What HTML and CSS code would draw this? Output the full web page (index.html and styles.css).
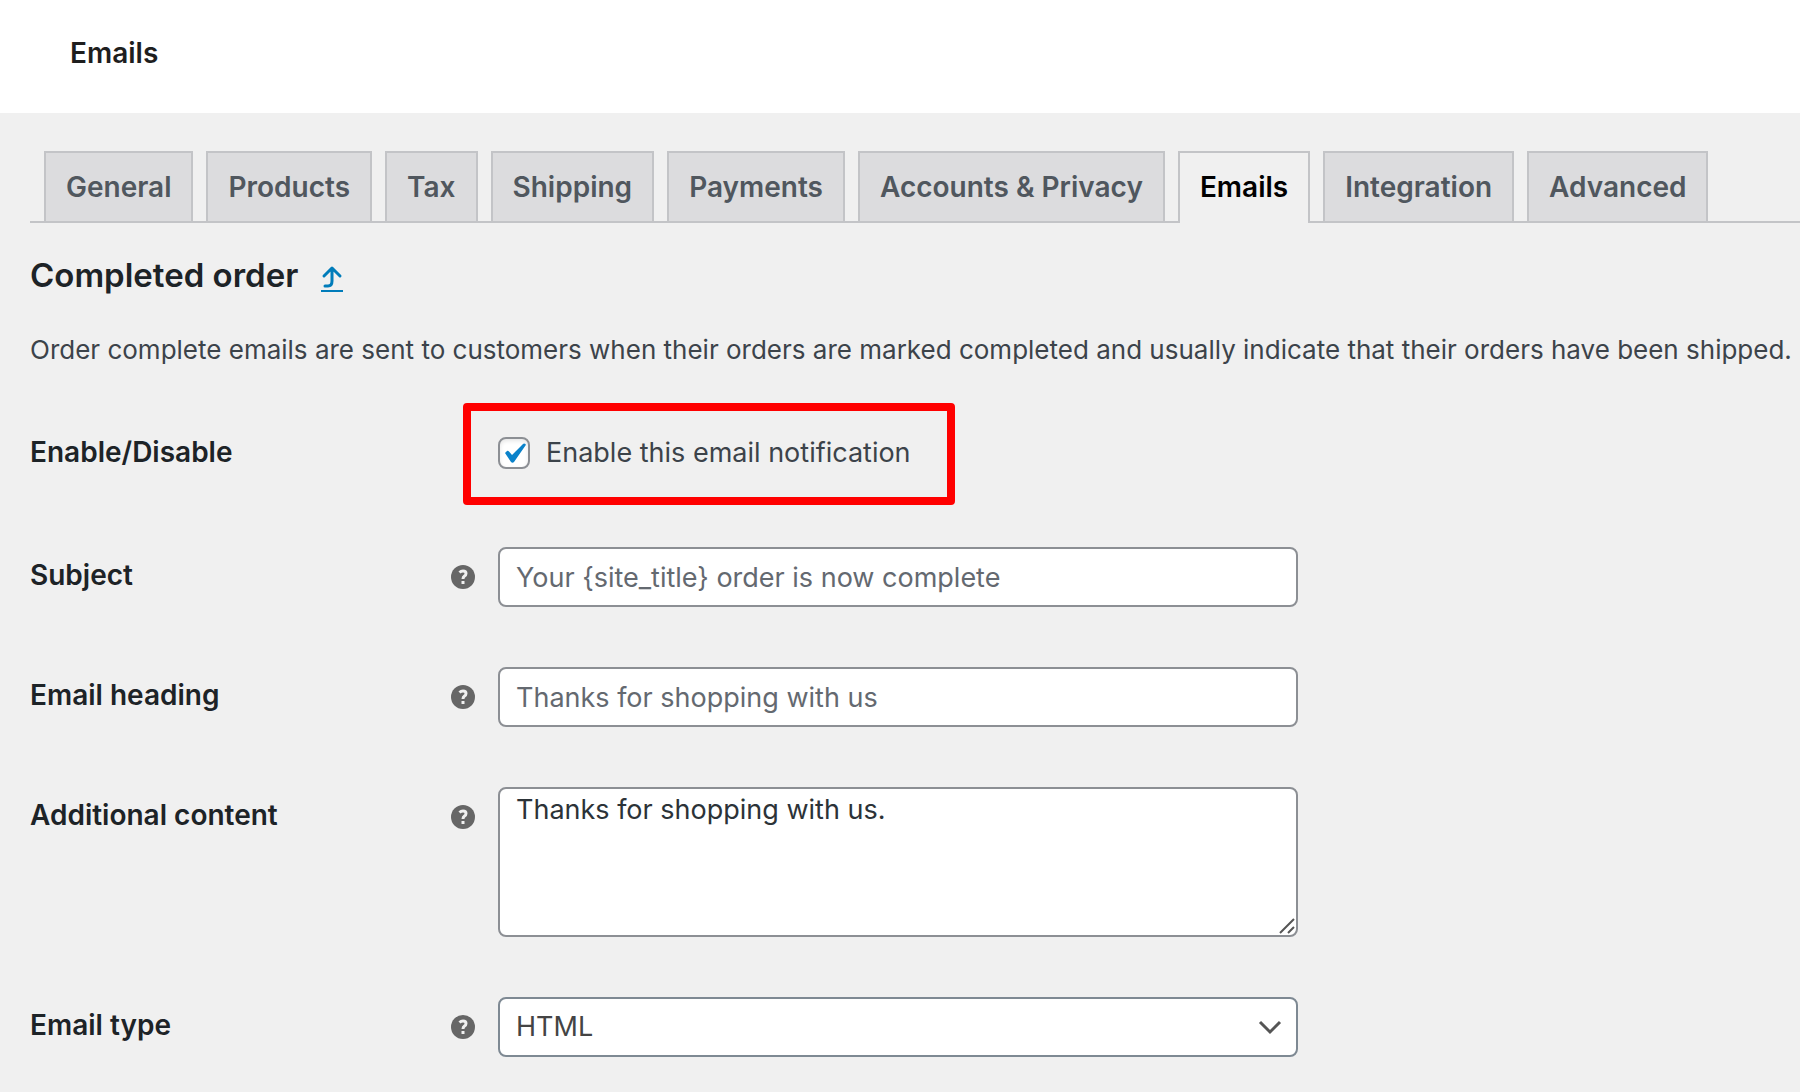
FILE: index.html
```html
<!DOCTYPE html>
<html lang="en">

<head>
	<meta charset="UTF-8">
	<title>Emails - Completed order</title>
	<meta name="viewport" content="width=device-width">
	<link rel="stylesheet" href="styles.css">
</head>

<body>
	<header class="topbar">
		<h1>Emails</h1>
	</header>
	<nav class="tabs">
		<a href="#" class="tab">General</a>
		<a href="#" class="tab">Products</a>
		<a href="#" class="tab">Tax</a>
		<a href="#" class="tab">Shipping</a>
		<a href="#" class="tab">Payments</a>
		<a href="#" class="tab">Accounts &amp; Privacy</a>
		<a href="#" class="tab active">Emails</a>
		<a href="#" class="tab">Integration</a>
		<a href="#" class="tab">Advanced</a>
	</nav>
	<main>
		<div class="title">
			<h2>Completed order</h2>
			<a href="#" class="back" aria-label="Return to emails">
				<svg width="24" height="28" viewBox="0 0 24 28" fill="none" stroke="currentColor">
					<path d="M4 12l8-8 8 8M12 5v12q0 5-4 5H5" stroke-width="3" stroke-linecap="round" stroke-linejoin="round" />
					<path d="M1 27h22" stroke-width="2" />
				</svg>
			</a>
		</div>
		<p class="description">Order complete emails are sent to customers when their orders are marked completed and usually indicate that their orders have been shipped.</p>

		<form action="#" method="post" class="settings">
			<div class="row">
				<span class="name">Enable/Disable</span>
				<label class="check" for="enabled">
					<span class="box">
						<input type="checkbox" id="enabled" checked>
						<svg class="tick" width="32" height="32" viewBox="0 0 32 32">
							<path d="M7 16l2-2q1-.5 2 .5l3 3.500L25 7q1-1 2.500 0 .5.500 0 1.500L16 25q-1.500 1.500-3 0z" fill="currentColor" />
						</svg>
					</span>
					Enable this email notification
				</label>
			</div>
			<div class="row">
				<label class="name" for="subject">Subject</label>
				<svg class="help" width="24" height="24" viewBox="0 0 24 24">
					<circle cx="12" cy="12" r="12" />
					<path d="M8.500 7.500q1.500-1.500 3.500-1.500 3 0 3 2.500 0 1.500-1.500 2.500t-1.500 3" />
					<path d="M12 16v3" />
				</svg>
				<input type="text" class="field" id="subject" placeholder="Your {site_title} order is now complete">
			</div>
			<div class="row">
				<label class="name" for="heading">Email heading</label>
				<svg class="help" width="24" height="24" viewBox="0 0 24 24">
					<circle cx="12" cy="12" r="12" />
					<path d="M8.500 7.500q1.500-1.500 3.500-1.500 3 0 3 2.500 0 1.500-1.500 2.500t-1.500 3" />
					<path d="M12 16v3" />
				</svg>
				<input type="text" class="field" id="heading" placeholder="Thanks for shopping with us">
			</div>
			<div class="row">
				<label class="name" for="content">Additional content</label>
				<svg class="help" width="24" height="24" viewBox="0 0 24 24">
					<circle cx="12" cy="12" r="12" />
					<path d="M8.500 7.500q1.500-1.500 3.500-1.500 3 0 3 2.500 0 1.500-1.500 2.500t-1.500 3" />
					<path d="M12 16v3" />
				</svg>
				<div class="control">
					<textarea class="field" id="content">Thanks for shopping with us.</textarea>
					<svg class="grip" width="16" height="16" viewBox="0 0 16 16">
						<path d="M1 15L15 1M9 15l6-6" />
					</svg>
				</div>
			</div>
			<div class="row">
				<label class="name" for="type">Email type</label>
				<svg class="help" width="24" height="24" viewBox="0 0 24 24">
					<circle cx="12" cy="12" r="12" />
					<path d="M8.500 7.500q1.500-1.500 3.500-1.500 3 0 3 2.500 0 1.500-1.500 2.500t-1.500 3" />
					<path d="M12 16v3" />
				</svg>
				<div class="control">
					<select class="field" id="type">
						<option>HTML</option>
						<option>Plain text</option>
						<option>Multipart</option>
					</select>
					<svg class="chevron" width="24" height="16" viewBox="0 0 24 16">
						<path d="M2 3l10 10L22 3" />
					</svg>
				</div>
			</div>
		</form>
	</main>
</body>

</html>
```
FILE: styles.css
```css
* {
	box-sizing: border-box;
}

body {
	margin: 0;
	background: #f0f0f0;
	color: #3c434a;
	font-family: Inter, "Liberation Sans", sans-serif;
	font-size: 27px;
}

h1,
h2,
p {
	margin: 0;
}

.topbar {
	padding: 34px 70px 41px;
	background: #fff;
}

.topbar h1 {
	color: #1e1e1e;
	font-size: 28px;
	font-weight: 600;
	line-height: 38px;
}

.tabs {
	display: flex;
	gap: 13px;
	margin: 38px 0 0 30px;
	padding-left: 14px;
	border-bottom: 2px solid #c3c4c7;
}

.tab {
	padding: 10px 20px;
	border: 2px solid #c3c4c7;
	border-bottom: 0;
	background: #dcdcde;
	color: #50575e;
	font-size: 28px;
	font-weight: 600;
	line-height: 48px;
	text-decoration: none;
	white-space: nowrap;
}

.tab.active {
	margin-bottom: -2px;
	background: #f0f0f0;
	color: #000;
}

main {
	padding: 30px 0 30px 30px;
}

.title {
	display: flex;
	align-items: center;
	gap: 22px;
}

.title h2 {
	color: #1d2327;
	font-size: 33px;
	font-weight: 600;
	line-height: 44px;
}

.back {
	display: flex;
	padding-top: 6px;
	color: #007cba;
}

.description {
	margin-top: 34px;
	font-size: 26px;
	line-height: 38px;
}

.settings {
	display: flex;
	flex-direction: column;
	gap: 60px;
	margin-top: 55px;
}

.row {
	display: flex;
	align-items: flex-start;
	min-height: 60px;
}

.name {
	width: 421px;
	padding-top: 9px;
	color: #1d2327;
	font-size: 28px;
	font-weight: 600;
	line-height: 38px;
}

.row:first-child {
	min-height: 63px;
}

.help {
	margin: 18px 23px 0 0;
	fill: #666;
}

.help path {
	fill: none;
	stroke: #f0f0f0;
	stroke-width: 3;
}

.check {
	position: relative;
	display: flex;
	align-items: center;
	gap: 16px;
	margin-left: 47px;
	padding-top: 10px;
	line-height: 38px;
}

/* red frame that draws the eye to the setting */
.check::before {
	content: "";
	position: absolute;
	inset: -21px -44px -33px -35px;
	border: 8px solid #f00;
	border-radius: 4px;
	pointer-events: none;
}

.box {
	display: grid;
}

.box input,
.tick {
	grid-area: 1 / 1;
}

.box input {
	appearance: none;
	width: 32px;
	height: 32px;
	margin: 0;
	border: 2px solid #8c8f94;
	border-radius: 8px;
	background: #fff;
	box-shadow: inset 0 2px 4px rgba(0, 0, 0, 0.1);
}

.tick {
	color: #0a82ca;
	pointer-events: none;
	visibility: hidden;
}

.box input:checked + .tick {
	visibility: visible;
}

.control {
	position: relative;
	display: flex;
	flex: 0 1 800px;
}

.field {
	flex: 0 1 800px;
	height: 60px;
	margin: 0;
	padding: 0 16px;
	border: 2px solid #8c8f94;
	border-radius: 8px;
	background: #fff;
	color: #2c3338;
	font-family: inherit;
	font-size: 27px;
	line-height: 38px;
}

.field::placeholder {
	color: #646970;
	opacity: 1;
}

textarea.field {
	height: 150px;
	padding-top: 2px;
	resize: none;
}

select.field {
	appearance: none;
	border-color: #7e8993;
	color: #444;
}

.grip,
.chevron {
	position: absolute;
	fill: none;
	stroke: #555;
	pointer-events: none;
}

.grip {
	right: 3px;
	bottom: 3px;
	stroke-width: 2;
}

.chevron {
	top: 22px;
	right: 16px;
	stroke-width: 3;
}
```
